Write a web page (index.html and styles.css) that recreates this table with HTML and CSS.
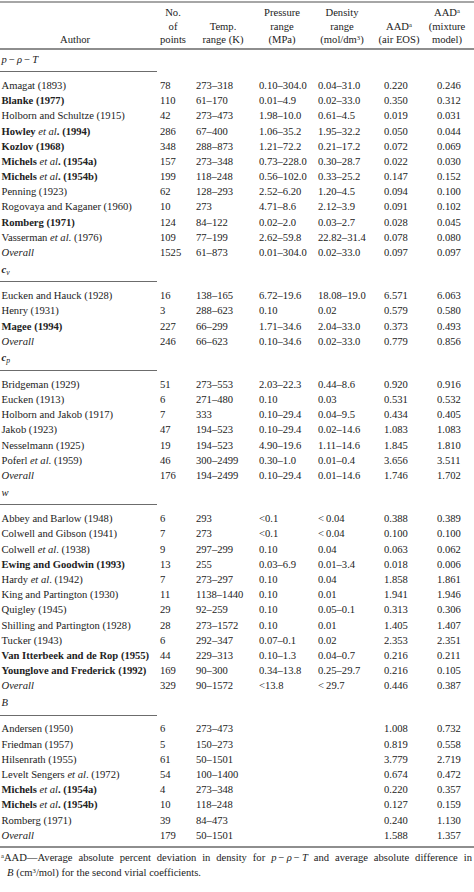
FILE: index.html
```html
<!DOCTYPE html>
<html>
<head>
<meta charset="utf-8">
<link rel="stylesheet" href="styles.css">
</head>
<body>
<div class="table">
  <div class="head">
    <div class="hcell"><span>Author</span></div>
    <div class="hcell"><span>No.</span><span>of</span><span>points</span></div>
    <div class="hcell"><span>Temp.</span><span>range (K)</span></div>
    <div class="hcell"><span>Pressure</span><span>range</span><span>(MPa)</span></div>
    <div class="hcell"><span>Density</span><span>range</span><span>(mol/dm<sup>3</sup>)</span></div>
    <div class="hcell"><span>AAD<sup>a</sup></span><span>(air EOS)</span></div>
    <div class="hcell"><span>AAD<sup>a</sup></span><span>(mixture</span><span>model)</span></div>
  </div>

  <section class="sec">
    <div class="sec-label"><i>p</i>&thinsp;−&thinsp;<i>ρ</i>&thinsp;−&thinsp;<i>T</i></div>
    <div class="sec-rule"></div>
    <div class="row"><span>Amagat (1893)</span><span>78</span><span>273–318</span><span>0.10–304.0</span><span>0.04–31.0</span><span>0.220</span><span>0.246</span></div>
    <div class="row"><span class="b">Blanke (1977)</span><span>110</span><span>61–170</span><span>0.01–4.9</span><span>0.02–33.0</span><span>0.350</span><span>0.312</span></div>
    <div class="row"><span>Holborn and Schultze (1915)</span><span>42</span><span>273–473</span><span>1.98–10.0</span><span>0.61–4.5</span><span>0.019</span><span>0.031</span></div>
    <div class="row"><span class="b">Howley <i>et al</i>. (1994)</span><span>286</span><span>67–400</span><span>1.06–35.2</span><span>1.95–32.2</span><span>0.050</span><span>0.044</span></div>
    <div class="row"><span class="b">Kozlov (1968)</span><span>348</span><span>288–873</span><span>1.21–72.2</span><span>0.21–17.2</span><span>0.072</span><span>0.069</span></div>
    <div class="row"><span class="b">Michels <i>et al</i>. (1954a)</span><span>157</span><span>273–348</span><span>0.73–228.0</span><span>0.30–28.7</span><span>0.022</span><span>0.030</span></div>
    <div class="row"><span class="b">Michels <i>et al</i>. (1954b)</span><span>199</span><span>118–248</span><span>0.56–102.0</span><span>0.33–25.2</span><span>0.147</span><span>0.152</span></div>
    <div class="row"><span>Penning (1923)</span><span>62</span><span>128–293</span><span>2.52–6.20</span><span>1.20–4.5</span><span>0.094</span><span>0.100</span></div>
    <div class="row"><span>Rogovaya and Kaganer (1960)</span><span>10</span><span>273</span><span>4.71–8.6</span><span>2.12–3.9</span><span>0.091</span><span>0.102</span></div>
    <div class="row"><span class="b">Romberg (1971)</span><span>124</span><span>84–122</span><span>0.02–2.0</span><span>0.03–2.7</span><span>0.028</span><span>0.045</span></div>
    <div class="row"><span>Vasserman <i>et al</i>. (1976)</span><span>109</span><span>77–199</span><span>2.62–59.8</span><span>22.82–31.4</span><span>0.078</span><span>0.080</span></div>
    <div class="row"><span><i>Overall</i></span><span>1525</span><span>61–873</span><span>0.01–304.0</span><span>0.02–33.0</span><span>0.097</span><span>0.097</span></div>
  </section>

  <section class="sec">
    <div class="sec-label"><b><i>c</i></b><sub><i>v</i></sub></div>
    <div class="sec-rule"></div>
    <div class="row"><span>Eucken and Hauck (1928)</span><span>16</span><span>138–165</span><span>6.72–19.6</span><span>18.08–19.0</span><span>6.571</span><span>6.063</span></div>
    <div class="row"><span>Henry (1931)</span><span>3</span><span>288–623</span><span>0.10</span><span>0.02</span><span>0.579</span><span>0.580</span></div>
    <div class="row"><span class="b">Magee (1994)</span><span>227</span><span>66–299</span><span>1.71–34.6</span><span>2.04–33.0</span><span>0.373</span><span>0.493</span></div>
    <div class="row"><span><i>Overall</i></span><span>246</span><span>66–623</span><span>0.10–34.6</span><span>0.02–33.0</span><span>0.779</span><span>0.856</span></div>
  </section>

  <section class="sec">
    <div class="sec-label"><b><i>c</i></b><sub><i>p</i></sub></div>
    <div class="sec-rule"></div>
    <div class="row"><span>Bridgeman (1929)</span><span>51</span><span>273–553</span><span>2.03–22.3</span><span>0.44–8.6</span><span>0.920</span><span>0.916</span></div>
    <div class="row"><span>Eucken (1913)</span><span>6</span><span>271–480</span><span>0.10</span><span>0.03</span><span>0.531</span><span>0.532</span></div>
    <div class="row"><span>Holborn and Jakob (1917)</span><span>7</span><span>333</span><span>0.10–29.4</span><span>0.04–9.5</span><span>0.434</span><span>0.405</span></div>
    <div class="row"><span>Jakob (1923)</span><span>47</span><span>194–523</span><span>0.10–29.4</span><span>0.02–14.6</span><span>1.083</span><span>1.083</span></div>
    <div class="row"><span>Nesselmann (1925)</span><span>19</span><span>194–523</span><span>4.90–19.6</span><span>1.11–14.6</span><span>1.845</span><span>1.810</span></div>
    <div class="row"><span>Poferl <i>et al</i>. (1959)</span><span>46</span><span>300–2499</span><span>0.30–1.0</span><span>0.01–0.4</span><span>3.656</span><span>3.511</span></div>
    <div class="row"><span><i>Overall</i></span><span>176</span><span>194–2499</span><span>0.10–29.4</span><span>0.01–14.6</span><span>1.746</span><span>1.702</span></div>
  </section>

  <section class="sec">
    <div class="sec-label"><i>w</i></div>
    <div class="sec-rule"></div>
    <div class="row"><span>Abbey and Barlow (1948)</span><span>6</span><span>293</span><span>&lt;0.1</span><span>&lt;&thinsp;0.04</span><span>0.388</span><span>0.389</span></div>
    <div class="row"><span>Colwell and Gibson (1941)</span><span>7</span><span>273</span><span>&lt;0.1</span><span>&lt;&thinsp;0.04</span><span>0.100</span><span>0.100</span></div>
    <div class="row"><span>Colwell <i>et al</i>. (1938)</span><span>9</span><span>297–299</span><span>0.10</span><span>0.04</span><span>0.063</span><span>0.062</span></div>
    <div class="row"><span class="b">Ewing and Goodwin (1993)</span><span>13</span><span>255</span><span>0.03–6.9</span><span>0.01–3.4</span><span>0.018</span><span>0.006</span></div>
    <div class="row"><span>Hardy <i>et al</i>. (1942)</span><span>7</span><span>273–297</span><span>0.10</span><span>0.04</span><span>1.858</span><span>1.861</span></div>
    <div class="row"><span>King and Partington (1930)</span><span>11</span><span>1138–1440</span><span>0.10</span><span>0.01</span><span>1.941</span><span>1.946</span></div>
    <div class="row"><span>Quigley (1945)</span><span>29</span><span>92–259</span><span>0.10</span><span>0.05–0.1</span><span>0.313</span><span>0.306</span></div>
    <div class="row"><span>Shilling and Partington (1928)</span><span>28</span><span>273–1572</span><span>0.10</span><span>0.01</span><span>1.405</span><span>1.407</span></div>
    <div class="row"><span>Tucker (1943)</span><span>6</span><span>292–347</span><span>0.07–0.1</span><span>0.02</span><span>2.353</span><span>2.351</span></div>
    <div class="row"><span class="b">Van Itterbeek and de Rop (1955)</span><span>44</span><span>229–313</span><span>0.10–1.3</span><span>0.04–0.7</span><span>0.216</span><span>0.211</span></div>
    <div class="row"><span class="b">Younglove and Frederick (1992)</span><span>169</span><span>90–300</span><span>0.34–13.8</span><span>0.25–29.7</span><span>0.216</span><span>0.105</span></div>
    <div class="row"><span><i>Overall</i></span><span>329</span><span>90–1572</span><span>&lt;13.8</span><span>&lt;&thinsp;29.7</span><span>0.446</span><span>0.387</span></div>
  </section>

  <section class="sec">
    <div class="sec-label"><i>B</i></div>
    <div class="sec-rule"></div>
    <div class="row"><span>Andersen (1950)</span><span>6</span><span>273–473</span><span></span><span></span><span>1.008</span><span>0.732</span></div>
    <div class="row"><span>Friedman (1957)</span><span>5</span><span>150–273</span><span></span><span></span><span>0.819</span><span>0.558</span></div>
    <div class="row"><span>Hilsenrath (1955)</span><span>61</span><span>50–1501</span><span></span><span></span><span>3.779</span><span>2.719</span></div>
    <div class="row"><span>Levelt Sengers <i>et al</i>. (1972)</span><span>54</span><span>100–1400</span><span></span><span></span><span>0.674</span><span>0.472</span></div>
    <div class="row"><span class="b">Michels <i>et al</i>. (1954a)</span><span>4</span><span>273–348</span><span></span><span></span><span>0.220</span><span>0.357</span></div>
    <div class="row"><span class="b">Michels <i>et al</i>. (1954b)</span><span>10</span><span>118–248</span><span></span><span></span><span>0.127</span><span>0.159</span></div>
    <div class="row"><span>Romberg (1971)</span><span>39</span><span>84–473</span><span></span><span></span><span>0.240</span><span>1.130</span></div>
    <div class="row"><span><i>Overall</i></span><span>179</span><span>50–1501</span><span></span><span></span><span>1.588</span><span>1.357</span></div>
  </section>

  <div class="end-rule"></div>
  <div class="foot">
    <div class="foot-l1"><sup>a</sup>AAD—Average absolute percent deviation in density for <i>p</i>&thinsp;−&thinsp;<i>ρ</i>&thinsp;−&thinsp;<i>T</i> and average absolute difference in</div>
    <div class="foot-l2"><i>B</i> (cm<sup>3</sup>/mol) for the second virial coefficients.</div>
  </div>
</div>
</body>
</html>
```

FILE: styles.css
```css
html, body {
  margin: 0;
  padding: 0;
  background: #ffffff;
}

body {
  color: #222222;
  font-family: "Liberation Serif", "Times New Roman", serif;
  font-size: 10.6px;
}

.table {
  width: 474px;
}

sup {
  font-size: 0.62em;
  line-height: 0;
  vertical-align: 0.5em;
}

sub {
  font-size: 0.72em;
  line-height: 0;
  vertical-align: -0.3em;
}

.head {
  display: grid;
  grid-template-columns: 150px 46px 54px 64px 56px 58px 38px;
  align-items: end;
  margin-top: 1px;
  border-top: 2px solid #a6a6a6;
  border-bottom: 2px solid #8e8e8e;
  padding: 3.25px 0 1.25px;
  line-height: 13.5px;
}

.hcell {
  display: flex;
  flex-direction: column;
  justify-content: flex-end;
  text-align: center;
  white-space: nowrap;
}

.hcell span {
  display: block;
}

.sec-label {
  line-height: 15.2px;
  height: 15.2px;
  margin-top: 1.5px;
  padding-left: 1.5px;
}

.sec-rule {
  width: 157px;
  border-top: 1px solid #6c6c6c;
  margin-top: 4.4px;
  margin-bottom: 5.9px;
}

.row {
  display: grid;
  grid-template-columns: 160px 36px 63px 59px 66px 53px 37px;
  line-height: 15.2px;
  height: 15.2px;
  white-space: nowrap;
}

.row > span:first-child {
  padding-left: 1.5px;
}

.b {
  font-weight: bold;
}

.b i {
  font-weight: normal;
}

.end-rule {
  border-top: 2px solid #8e8e8e;
  margin-top: 3.1px;
}

.foot {
  margin-top: 1.5px;
  line-height: 15px;
  width: 472px;
}

.foot-l1 {
  padding-left: 1px;
  text-align: justify;
  text-align-last: justify;
  white-space: nowrap;
}

.foot-l2 {
  padding-left: 7px;
}
```
